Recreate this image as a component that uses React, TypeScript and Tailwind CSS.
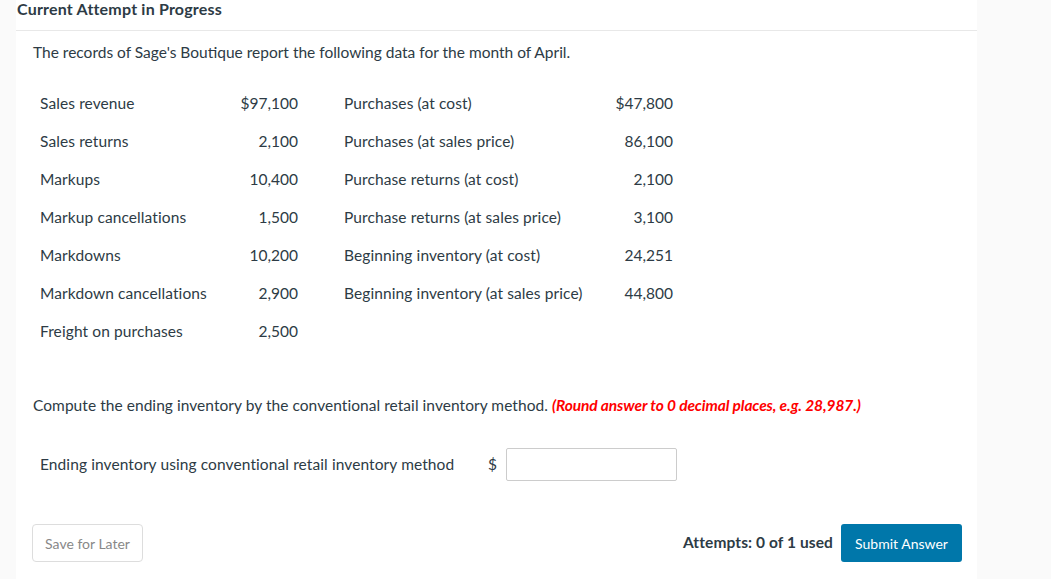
const left: [string, string][] = [
  ["Sales revenue", "$97,100"],
  ["Sales returns", "2,100"],
  ["Markups", "10,400"],
  ["Markup cancellations", "1,500"],
  ["Markdowns", "10,200"],
  ["Markdown cancellations", "2,900"],
  ["Freight on purchases", "2,500"],
];

const right: [string, string][] = [
  ["Purchases (at cost)", "$47,800"],
  ["Purchases (at sales price)", "86,100"],
  ["Purchase returns (at cost)", "2,100"],
  ["Purchase returns (at sales price)", "3,100"],
  ["Beginning inventory (at cost)", "24,251"],
  ["Beginning inventory (at sales price)", "44,800"],
];

export default function App() {
  return (
    <div
      className="flex h-[579px] w-[1051px] bg-[#fafafa] text-[#2d3b45]"
      style={{ fontFamily: "Lato, 'Open Sans', sans-serif" }}
    >
      <div className="ml-[16px] flex w-[961px] flex-col bg-white">
        <div className="h-[31px] border-b border-[#e8e8e8] pl-[1px] text-[16px] font-bold leading-[17px] tracking-[0.2px]">
          Current Attempt in Progress
        </div>
        <p className="mt-[11px] pl-[17px] text-[15.5px] leading-[20px]">
          The records of Sage's Boutique report the following data for the month of April.
        </p>
        <div className="mt-[31px] flex pl-[24px] text-[15.5px] leading-[20px] tracking-[0.1px]">
          <div className="flex w-[258px] flex-col gap-[18px]">
            {left.map(([k, v]) => (
              <div key={k} className="flex justify-between">
                <span>{k}</span>
                <span className="tracking-normal">{v}</span>
              </div>
            ))}
          </div>
          <div className="ml-[46px] flex w-[329px] flex-col gap-[18px]">
            {right.map(([k, v]) => (
              <div key={k} className="flex justify-between">
                <span>{k}</span>
                <span className="tracking-normal">{v}</span>
              </div>
            ))}
          </div>
        </div>
        <p className="mt-[54px] pl-[17px] text-[15.5px] leading-[20px] tracking-[0.05px]">
          Compute the ending inventory by the conventional retail inventory method.{" "}
          <span className="font-bold italic tracking-[-0.1px] text-[#ff0000]">
            (Round answer to 0 decimal places, e.g. 28,987.)
          </span>
        </p>
        <div className="mt-[33px] flex items-center pl-[24px] text-[15.5px] tracking-[0.1px]">
          <span className="w-[448px]">Ending inventory using conventional retail inventory method</span>
          <span className="w-[18px]">$</span>
          <input className="h-[33px] w-[171px] rounded-[2px] border border-[#cccccc] outline-none" />
        </div>
        <div className="mt-auto mb-[17px] flex items-center pl-[16px] pr-[15px]">
          <button className="h-[38px] w-[111px] rounded-[4px] border border-[#dddddd] text-[14px] text-[#888888]">
            Save for Later
          </button>
          <span className="ml-auto mr-[8px] text-[15.5px] font-bold tracking-[0.1px]">Attempts: 0 of 1 used</span>
          <button className="h-[38px] w-[121px] rounded-[3px] bg-[#0077aa] text-[14px] text-white">
            Submit Answer
          </button>
        </div>
      </div>
    </div>
  );
}
